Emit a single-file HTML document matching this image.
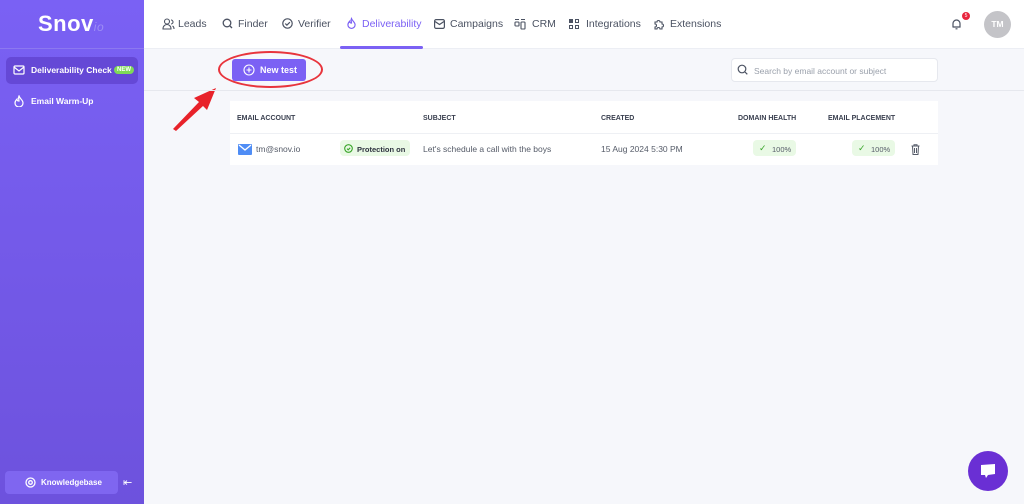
<!DOCTYPE html>
<html><head><meta charset="utf-8"><style>
*{margin:0;padding:0;box-sizing:border-box}
body{width:1024px;height:504px;overflow:hidden;background:#f6f7fb;font-family:"Liberation Sans",sans-serif;position:relative}
.side{position:absolute;left:0;top:0;width:144px;height:504px;background:linear-gradient(#7a61f4,#6d52dd)}
.logo{position:absolute;left:38px;top:11px;color:#fff;font-size:22px;font-weight:bold;letter-spacing:.5px}
.logo i{font-size:12px;color:#9d8df5;font-weight:normal}
.sideline{position:absolute;left:0;top:48px;width:144px;height:1px;background:#8c78f0}
.act{position:absolute;left:6px;top:57px;width:132px;height:27px;background:#6548d6;border-radius:5px}
.si{position:absolute;color:#fff;font-size:8.5px;font-weight:bold}
.new{position:absolute;left:114px;top:66px;background:#7ed957;color:#fff;font-size:6px;font-weight:bold;padding:1px 3px;border-radius:4px}
.kb{position:absolute;left:5px;top:471px;width:113px;height:23px;background:#7f66f0;border-radius:4px;color:#fff;font-size:8px;font-weight:bold;padding:7px 0 0 36px}
.top{position:absolute;left:144px;top:0;right:0;height:49px;background:#fff;border-bottom:1px solid #eceef4}
.nav{position:absolute;top:18px;font-size:10.5px;color:#4b5262}
.ul{position:absolute;left:340px;top:46px;width:83px;height:3px;background:#7b61f4;border-radius:2px}
.btn{position:absolute;left:232px;top:59px;width:74px;height:22px;background:#7b61f4;border-radius:3px;color:#fff;font-size:9px;font-weight:bold;padding:6px 0 0 28px}
.oval{position:absolute;left:218px;top:51px;width:105px;height:37px;border:2px solid #e8343c;border-radius:50%}
.search{position:absolute;left:731px;top:58px;width:207px;height:24px;background:#fff;border:1px solid #e6e8ee;border-radius:4px;font-size:8.5px;color:#9aa0ab;padding:7px 0 0 22px}
.hr{position:absolute;left:144px;top:90px;right:0;height:1px;background:#e6e8ee}
.card{position:absolute;left:230px;top:101px;width:708px;height:64px;background:#fff}
.th{position:absolute;top:14px;font-size:7px;font-weight:bold;color:#3a4050}
.td{position:absolute;top:43px;font-size:8.5px;color:#555b68}
.pill{position:absolute;background:#e9f9e5;border-radius:4px;height:16px}
</style></head><body>
<div class="side">
<div class="logo">Snov<i>io</i></div>
<div class="sideline"></div>
<div class="act"></div>
<svg style="position:absolute;left:13px;top:64px" width="12" height="12" viewBox="0 0 12 12" fill="none" stroke="#fff" stroke-width="1.2"><rect x="1" y="2" width="10" height="8" rx="1"/><path d="M1 3l5 4 5-4"/></svg>
<div class="si" style="left:31px;top:65px">Deliverability Check</div>
<div class="new">NEW</div>
<svg style="position:absolute;left:14px;top:95px" width="10" height="12" viewBox="0 0 10 12" fill="none" stroke="#fff" stroke-width="1.2"><path d="M5 1C6 4 9 5 9 8a4 4 0 0 1-8 0c0-2 1-3 2-4 0 2 1 2 2 2C5 4 4 3 5 1z"/></svg>
<div class="si" style="left:31px;top:96px">Email Warm-Up</div>
<div class="kb">Knowledgebase</div>
<svg style="position:absolute;left:25px;top:477px" width="11" height="11" viewBox="0 0 11 11" fill="none" stroke="#fff" stroke-width="1.3"><circle cx="5.5" cy="5.5" r="4.5"/><circle cx="5.5" cy="5.5" r="1.8"/></svg>
<div style="position:absolute;left:123px;top:476px;color:#fff;font-size:11px">⇤</div>
</div>
<div class="top"></div>
<svg style="position:absolute;left:162px;top:18px" width="13" height="12" viewBox="0 0 13 12" fill="none" stroke="#4b5262" stroke-width="1.1"><circle cx="5" cy="3.5" r="2.5"/><path d="M1 11c0-3 2-4.5 4-4.5s4 1.5 4 4.5zM9 2a2 2 0 0 1 0 4M10.5 8c1 .5 1.5 1.5 1.5 3"/></svg>
<div class="nav" style="left:178px">Leads</div>
<svg style="position:absolute;left:222px;top:18px" width="11" height="11" viewBox="0 0 11 11" fill="none" stroke="#4b5262" stroke-width="1.3"><circle cx="5" cy="5" r="3.8"/><path d="M8 8l2 2"/></svg>
<div class="nav" style="left:238px">Finder</div>
<svg style="position:absolute;left:282px;top:18px" width="11" height="11" viewBox="0 0 11 11" fill="none" stroke="#4b5262" stroke-width="1.2"><circle cx="5.5" cy="5.5" r="4.7"/><path d="M3.3 5.6l1.6 1.6 3-3"/></svg>
<div class="nav" style="left:298px">Verifier</div>
<svg style="position:absolute;left:347px;top:17px" width="9" height="12" viewBox="0 0 10 12" fill="none" stroke="#7b61f4" stroke-width="1.3"><path d="M5 1C6 4 9 5 9 8a4 4 0 0 1-8 0c0-2 1-3 2-4 0 2 1 2 2 2C5 4 4 3 5 1z"/></svg>
<div class="nav" style="left:362px;color:#7b61f4">Deliverability</div>
<div class="ul"></div>
<svg style="position:absolute;left:434px;top:19px" width="11" height="10" viewBox="0 0 11 10" fill="none" stroke="#4b5262" stroke-width="1.2"><rect x=".6" y=".6" width="9.8" height="8.8" rx="1.5"/><path d="M1 2.5l4.5 3 4.5-3"/></svg>
<div class="nav" style="left:450px">Campaigns</div>
<svg style="position:absolute;left:514px;top:18px" width="12" height="12" viewBox="0 0 12 12" fill="none" stroke="#4b5262" stroke-width="1.1"><path d="M1 1.5h4M7 1.5h4"/><rect x="1" y="4" width="4" height="4" rx=".8"/><rect x="7" y="4" width="4" height="7" rx=".8"/></svg>
<div class="nav" style="left:532px">CRM</div>
<svg style="position:absolute;left:569px;top:19px" width="10" height="10" viewBox="0 0 10 10" fill="#4b5262"><rect width="4" height="4"/><rect x="6.5" y=".5" width="3" height="3" fill="none" stroke="#4b5262"/><rect x=".5" y="6.5" width="3" height="3" fill="none" stroke="#4b5262"/><rect x="6.5" y="6.5" width="3" height="3" fill="none" stroke="#4b5262"/></svg>
<div class="nav" style="left:586px">Integrations</div>
<svg style="position:absolute;left:653px;top:18px" width="12" height="12" viewBox="0 0 12 12" fill="none" stroke="#4b5262" stroke-width="1.1"><path d="M2 4h2a1.5 1.5 0 1 1 3 0h2v2a1.5 1.5 0 1 1 0 3v2H7a1.5 1.5 0 1 0-3 0H2V9a1.5 1.5 0 1 0 0-3z"/></svg>
<div class="nav" style="left:670px">Extensions</div>
<svg style="position:absolute;left:951px;top:18px" width="11" height="12" viewBox="0 0 11 12" fill="none" stroke="#4b5262" stroke-width="1.2"><path d="M2 9V5.5a3.5 3.5 0 0 1 7 0V9H1.5h8M4.5 10.8h2"/></svg>
<div style="position:absolute;left:962px;top:12px;width:8px;height:8px;background:#e8253d;border-radius:50%;color:#fff;font-size:5px;text-align:center;line-height:8px">5</div>
<div style="position:absolute;left:984px;top:11px;width:27px;height:27px;background:#c4c4c8;border-radius:50%;color:#fff;font-size:8.5px;font-weight:bold;text-align:center;line-height:27px">TM</div>
<div class="btn">New test</div>
<svg style="position:absolute;left:243px;top:64px" width="12" height="12" viewBox="0 0 12 12" fill="none" stroke="#fff" stroke-width="1.1"><circle cx="6" cy="6" r="5"/><path d="M6 3.5v5M3.5 6h5"/></svg>
<div class="oval"></div>
<svg style="position:absolute;left:170px;top:85px" width="50" height="46" viewBox="0 0 50 46"><path d="M3 44L29 17l-5-4 22-10-9 22-4-4L6 46z" fill="#e8222a"/></svg>
<div class="search">Search by email account or subject</div>
<svg style="position:absolute;left:737px;top:64px" width="11" height="11" viewBox="0 0 11 11" fill="none" stroke="#4b5262" stroke-width="1.2"><circle cx="5" cy="5" r="3.8"/><path d="M8 8l2.3 2.3"/></svg>
<div class="hr"></div>
<div class="card">
<div style="position:absolute;left:0;top:32px;width:708px;height:1px;background:#eef0f4"></div>
<div class="th" style="left:7px">EMAIL ACCOUNT</div>
<div class="th" style="left:193px">SUBJECT</div>
<div class="th" style="left:371px">CREATED</div>
<div class="th" style="left:508px">DOMAIN HEALTH</div>
<div class="th" style="left:598px">EMAIL PLACEMENT</div>
<svg style="position:absolute;left:8px;top:43px" width="14" height="11" viewBox="0 0 14 11"><rect width="14" height="11" rx="1" fill="#4f8df5"/><path d="M1 1l6 5 6-5" stroke="#fff" stroke-width="1.3" fill="none"/></svg>
<div class="td" style="left:26px">tm@snov.io</div>
<div class="pill" style="left:110px;top:39px;width:70px"></div>
<svg style="position:absolute;left:114px;top:43px" width="9" height="9" viewBox="0 0 9 9" fill="none" stroke="#3aa52a" stroke-width="1.1"><circle cx="4.5" cy="4.5" r="3.8"/><path d="M3 4.6l1.2 1.2 2-2"/></svg>
<div class="td" style="left:127px;top:44px;font-size:7.5px;font-weight:bold;color:#2f3440">Protection on</div>
<div class="td" style="left:193px">Let's schedule a call with the boys</div>
<div class="td" style="left:371px">15 Aug 2024 5:30 PM</div>
<div class="pill" style="left:523px;top:39px;width:43px"></div>
<div class="td" style="left:529px;top:42px;color:#3aa52a;font-size:9px">✓</div>
<div class="td" style="left:542px;top:44px;font-size:7.5px">100%</div>
<div class="pill" style="left:622px;top:39px;width:43px"></div>
<div class="td" style="left:628px;top:42px;color:#3aa52a;font-size:9px">✓</div>
<div class="td" style="left:641px;top:44px;font-size:7.5px">100%</div>
<svg style="position:absolute;left:681px;top:43px" width="9" height="11" viewBox="0 0 9 11" fill="none" stroke="#555b68" stroke-width="1"><path d="M.5 2h8M3 2V.7h3V2M1.5 2l.5 8.5h5l.5-8.5M3.5 4v5M5.5 4v5"/></svg>
</div>
<div style="position:absolute;left:968px;top:451px;width:40px;height:40px;background:#6a2fd4;border-radius:50%"></div>
<svg style="position:absolute;left:979px;top:462px" width="18" height="18" viewBox="0 0 18 18"><path d="M2 3l14-1v10l-7 1-2 3-1-3-4 0z" fill="#fff"/></svg>
</body></html>
